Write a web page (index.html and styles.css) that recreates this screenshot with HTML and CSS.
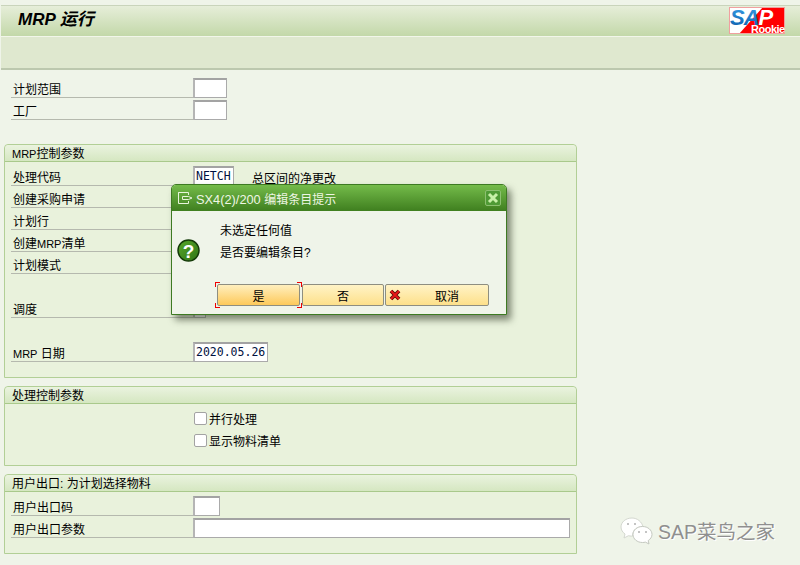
FILE: index.html
```html
<!DOCTYPE html>
<html lang="zh-CN">
<head>
    <meta charset="UTF-8">
    <meta name="viewport" content="width=device-width, initial-scale=1.0">
    <title>MRP 运行</title>
    <link rel="stylesheet" href="styles.css">
</head>
<body>
    <div class="title-bar">
        <h1>MRP 运行</h1>
        <svg class="sap-logo" width="56" height="27" viewBox="0 0 56 27">
            <defs>
                <linearGradient id="sapBlue" x1="0" y1="0" x2="0" y2="1">
                    <stop offset="0" stop-color="#3aa0e8"/>
                    <stop offset="1" stop-color="#0a5aa8"/>
                </linearGradient>
            </defs>
            <rect width="56" height="27" fill="#ff0000"/>
            <polygon points="0,0 34,0 10,27 0,27" fill="#ffffff"/>
            <rect x="0.5" y="0.5" width="55" height="26" fill="none" stroke="#f0a0a0"/>
            <text x="1" y="18" class="sap-word"><tspan fill="url(#sapBlue)">SA</tspan><tspan fill="#fff">P</tspan></text>
            <text x="22" y="25.500" class="sap-rookie">Rookie</text>
        </svg>
    </div>
    <div class="toolbar"></div>

    <div class="content">
        <div class="plain-rows">
            <div class="row"><span class="label">计划范围</span><span class="input w34"></span></div>
            <div class="row"><span class="label">工厂</span><span class="input w34"></span></div>
        </div>

        <section class="group group-control">
            <div class="group-title"><span class="latin">MRP</span>控制参数</div>
            <div class="row"><span class="label">处理代码</span><span class="input w41 value">NETCH</span><span class="note">总区间的净更改</span></div>
            <div class="row"><span class="label">创建采购申请</span><span class="input w34"></span></div>
            <div class="row"><span class="label">计划行</span><span class="input w34"></span></div>
            <div class="row"><span class="label">创建<span class="latin">MRP</span>清单</span><span class="input w34"></span></div>
            <div class="row"><span class="label">计划模式</span><span class="input w34"></span></div>
            <div class="row blank"></div>
            <div class="row"><span class="label">调度</span><span class="input w13"></span></div>
            <div class="row blank"></div>
            <div class="row"><span class="label"><span class="latin">MRP</span> 日期</span><span class="input w75 value">2020.05.26</span></div>
        </section>

        <section class="group group-process">
            <div class="group-title">处理控制参数</div>
            <label class="check-row"><span class="checkbox"></span>并行处理</label>
            <label class="check-row"><span class="checkbox"></span>显示物料清单</label>
        </section>

        <section class="group group-exit">
            <div class="group-title">用户出口: 为计划选择物料</div>
            <div class="row"><span class="label">用户出口码</span><span class="input w27"></span></div>
            <div class="row"><span class="label">用户出口参数</span><span class="input w377"></span></div>
        </section>
    </div>

    <div class="watermark">
        <svg width="33" height="28" viewBox="0 0 33 28">
            <path d="M12 1C5.800 1 1 5 1 10c0 2.900 1.600 5.300 4 7l-1 4 4.500-2.300c1 .3 2 .4 3 .4 .5 0 .8 0 1.200-.1C12.300 13 17 9.600 23 9.700 21.800 4.800 17.300 1 12 1z" fill="#fff" stroke="#d4d8d0" stroke-width="1"/>
            <path d="M32 17.500C32 13 27.800 9.500 22.500 9.500S13 13 13 17.500 17.200 25.500 22.500 25.500c1 0 2-.1 2.900-.4L29 27l-.8-3.400c2.300-1.500 3.800-3.700 3.800-6.100z" fill="#fff" stroke="#c4c8c0" stroke-width="1"/>
            <circle cx="8" cy="7" r="1" fill="#b0b0b0"/><circle cx="15" cy="7" r="1" fill="#b0b0b0"/>
            <circle cx="19" cy="15" r="1" fill="#b0b0b0"/><circle cx="26" cy="15" r="1" fill="#b0b0b0"/>
        </svg>
        <span>SAP菜鸟之家</span>
    </div>

    <div class="dialog">
        <div class="dialog-title">
            <svg width="15" height="12" viewBox="0 0 15 12" fill="none" stroke="#e8f4dc" stroke-width="1">
                <path d="M.5 3V.5H10.500V3M.5 .5V11.500H10.500V9"/>
                <path d="M4.500 4.500H10.500L14 6 10.500 7.500H4.500z"/>
            </svg>
            <span class="dialog-caption"><span class="caption-latin">SX4(2)/200 </span>编辑条目提示</span>
            <span class="dialog-close">
                <svg width="12" height="12" viewBox="0 0 12 12"><path d="M2 2l8 8M10 2l-8 8" stroke="#c8f0a8" stroke-width="3"/></svg>
            </span>
        </div>
        <div class="dialog-body">
            <svg class="question" width="23" height="23" viewBox="0 0 23 23">
                <defs>
                    <linearGradient id="qGreen" x1="0" y1="0" x2="1" y2="1">
                        <stop offset="0" stop-color="#58a82a"/>
                        <stop offset="1" stop-color="#2f7414"/>
                    </linearGradient>
                </defs>
                <circle cx="11.500" cy="11.500" r="10.500" fill="url(#qGreen)" stroke="#143a08" stroke-width="1.500"/>
                <text x="11.500" y="18.500" class="question-mark">?</text>
            </svg>
            <div class="dialog-text">
                <p>未选定任何值</p>
                <p>是否要编辑条目?</p>
            </div>
        </div>
        <div class="dialog-buttons">
            <button class="btn btn-focus">是</button>
            <button class="btn btn-no">否</button>
            <button class="btn btn-cancel">
                <svg width="12" height="12" viewBox="0 0 12 12">
                    <path d="M2 2l8 8M10 2l-8 8" stroke="#5a0808" stroke-width="3.800"/>
                    <path d="M2 2l8 8M10 2l-8 8" stroke="#e81818" stroke-width="2"/>
                </svg>
                <span>取消</span>
            </button>
        </div>
    </div>
</body>
</html>
```

FILE: styles.css
```css
* {
    margin: 0;
    padding: 0;
    box-sizing: border-box;
    font-family: "Liberation Sans", "Noto Sans CJK SC", sans-serif;
}

body {
    width: 800px;
    height: 565px;
    overflow: hidden;
    position: relative;
    background-color: #eff4e9;
    color: #000;
    font-size: 12px;
    padding-top: 5px;
}

.latin {
    font-size: 11px;
}

.title-bar {
    height: 31px;
    margin-left: 1px;
    padding: 1px 15px 0 17px;
    display: flex;
    justify-content: space-between;
    align-items: flex-start;
    background: linear-gradient(#e6eed9, #c3d8a9);
    border-top: 1px solid #c9d4bb;
}

.title-bar h1 {
    font-size: 17px;
    font-style: italic;
    font-weight: bold;
    line-height: 25px;
}

.sap-word {
    font: italic bold 22px "Liberation Sans", sans-serif;
    letter-spacing: -1px;
}

.sap-rookie {
    font: bold 11px "Liberation Sans", sans-serif;
    letter-spacing: -0.5px;
    fill: #fff;
}

.toolbar {
    height: 34px;
    margin-left: 1px;
    background-color: #dfe8cf;
    border-top: 1px solid #f2f6ea;
    border-bottom: 2px solid #bcc8ae;
}

.content {
    padding: 0 223px 0 4px;
}

.plain-rows {
    padding: 6px 0 0 7px;
}

.row {
    height: 22px;
    display: flex;
    align-items: flex-end;
}

.label {
    width: 182px;
    height: 22px;
    line-height: 28px;
    padding-left: 2px;
    border-bottom: 1px solid #b5b9ae;
    white-space: nowrap;
}

.input {
    height: 20px;
    background-color: #fff;
    border: 1px solid #aaa;
    border-top: 2px solid #a3a3a3;
    border-left: 2px solid #b5b5b5;
}

.w13 { width: 13px; }
.w27 { width: 27px; }
.w34 { width: 34px; }
.w41 { width: 41px; }
.w75 { width: 75px; }
.w377 { width: 377px; }

.value {
    padding-left: 1px;
    font: 11.5px/16px "DejaVu Sans Mono", monospace;
    color: #001040;
}

.note {
    margin-left: 18px;
    line-height: 14px;
}

.group {
    background-color: #e9f2dc;
    border: 1px solid #b2cf96;
    border-top-left-radius: 4px;
    border-top-right-radius: 4px;
}

.group-control {
    height: 234px;
    margin-top: 24px;
}

.group-process {
    height: 80px;
    margin-top: 8px;
}

.group-exit {
    height: 80px;
    margin-top: 8px;
}

.group-title {
    height: 17px;
    padding-left: 7px;
    margin-bottom: 2px;
    line-height: 19px;
    background: linear-gradient(#eaf3df, #d5e7c1);
    border-bottom: 1px solid #a9c98b;
    border-top-left-radius: 4px;
    border-top-right-radius: 4px;
}

.group .row {
    margin-left: 6px;
}

.row.blank {
    visibility: hidden;
}

.check-row {
    height: 22px;
    display: flex;
    align-items: center;
    padding-left: 189px;
}

.group-process .group-title {
    margin-bottom: 3px;
}

.checkbox {
    width: 13px;
    height: 13px;
    margin-right: 2px;
    background-color: #fff;
    border: 1px solid #a3a3a3;
    border-radius: 2px;
}

.watermark {
    position: absolute;
    left: 620px;
    top: 516px;
    display: flex;
    align-items: center;
    gap: 5px;
    font-size: 19.5px;
    color: #8f8f8f;
    text-shadow: 1px 1px 0 #fff;
}

.dialog {
    position: absolute;
    left: 171px;
    top: 184px;
    width: 336px;
    height: 131px;
    background-color: #eff4e9;
    border: 1px solid #3d7a22;
    border-top-left-radius: 5px;
    border-top-right-radius: 5px;
    box-shadow: 4px 5px 7px rgba(50, 60, 40, 0.6);
}

.dialog-title {
    height: 26px;
    padding: 0 5px 0 6px;
    display: flex;
    align-items: center;
    background: linear-gradient(#74bb4a, #3f7f1f);
    border-top-left-radius: 4px;
    border-top-right-radius: 4px;
    color: #eef6e4;
}

.dialog-caption {
    flex: 1;
    margin-left: 3px;
    white-space: pre;
}

.caption-latin {
    font-size: 12.8px;
}

.dialog-close {
    width: 16px;
    height: 16px;
    display: flex;
    align-items: center;
    justify-content: center;
    background-color: #4f9a35;
    border: 1px solid #8cc070;
    border-radius: 2px;
}

.dialog-body {
    height: 73px;
    padding: 9px 0 0 5px;
    display: flex;
    align-items: flex-start;
}

.question {
    margin-top: 19px;
}

.question-mark {
    font: bold 19px "Liberation Sans", sans-serif;
    fill: #fff;
    text-anchor: middle;
}

.dialog-text {
    margin-left: 20px;
    line-height: 22px;
}

.dialog-buttons {
    display: flex;
    padding-left: 45px;
    gap: 1px;
}

.btn {
    height: 22px;
    font-size: 12px;
    color: #000;
    background: linear-gradient(#fff3c6, #fde08a);
    border: 1px solid #8e8e80;
    border-radius: 2px;
}

.btn-focus {
    width: 83px;
    margin-right: 1px;
    background: linear-gradient(#ffefbe, #fdc95a);
    position: relative;
}

.btn-focus::before {
    content: "";
    position: absolute;
    inset: -3px;
    background:
        linear-gradient(#e00, #e00) 0 0 / 5px 1px no-repeat,
        linear-gradient(#e00, #e00) 0 0 / 1px 5px no-repeat,
        linear-gradient(#e00, #e00) 100% 0 / 5px 1px no-repeat,
        linear-gradient(#e00, #e00) 100% 0 / 1px 5px no-repeat,
        linear-gradient(#e00, #e00) 0 100% / 5px 1px no-repeat,
        linear-gradient(#e00, #e00) 0 100% / 1px 5px no-repeat,
        linear-gradient(#e00, #e00) 100% 100% / 5px 1px no-repeat,
        linear-gradient(#e00, #e00) 100% 100% / 1px 5px no-repeat;
}

.btn-no {
    width: 82px;
}

.btn-cancel {
    width: 104px;
    padding: 0 29px 0 3px;
    display: flex;
    align-items: center;
    justify-content: space-between;
}
```
